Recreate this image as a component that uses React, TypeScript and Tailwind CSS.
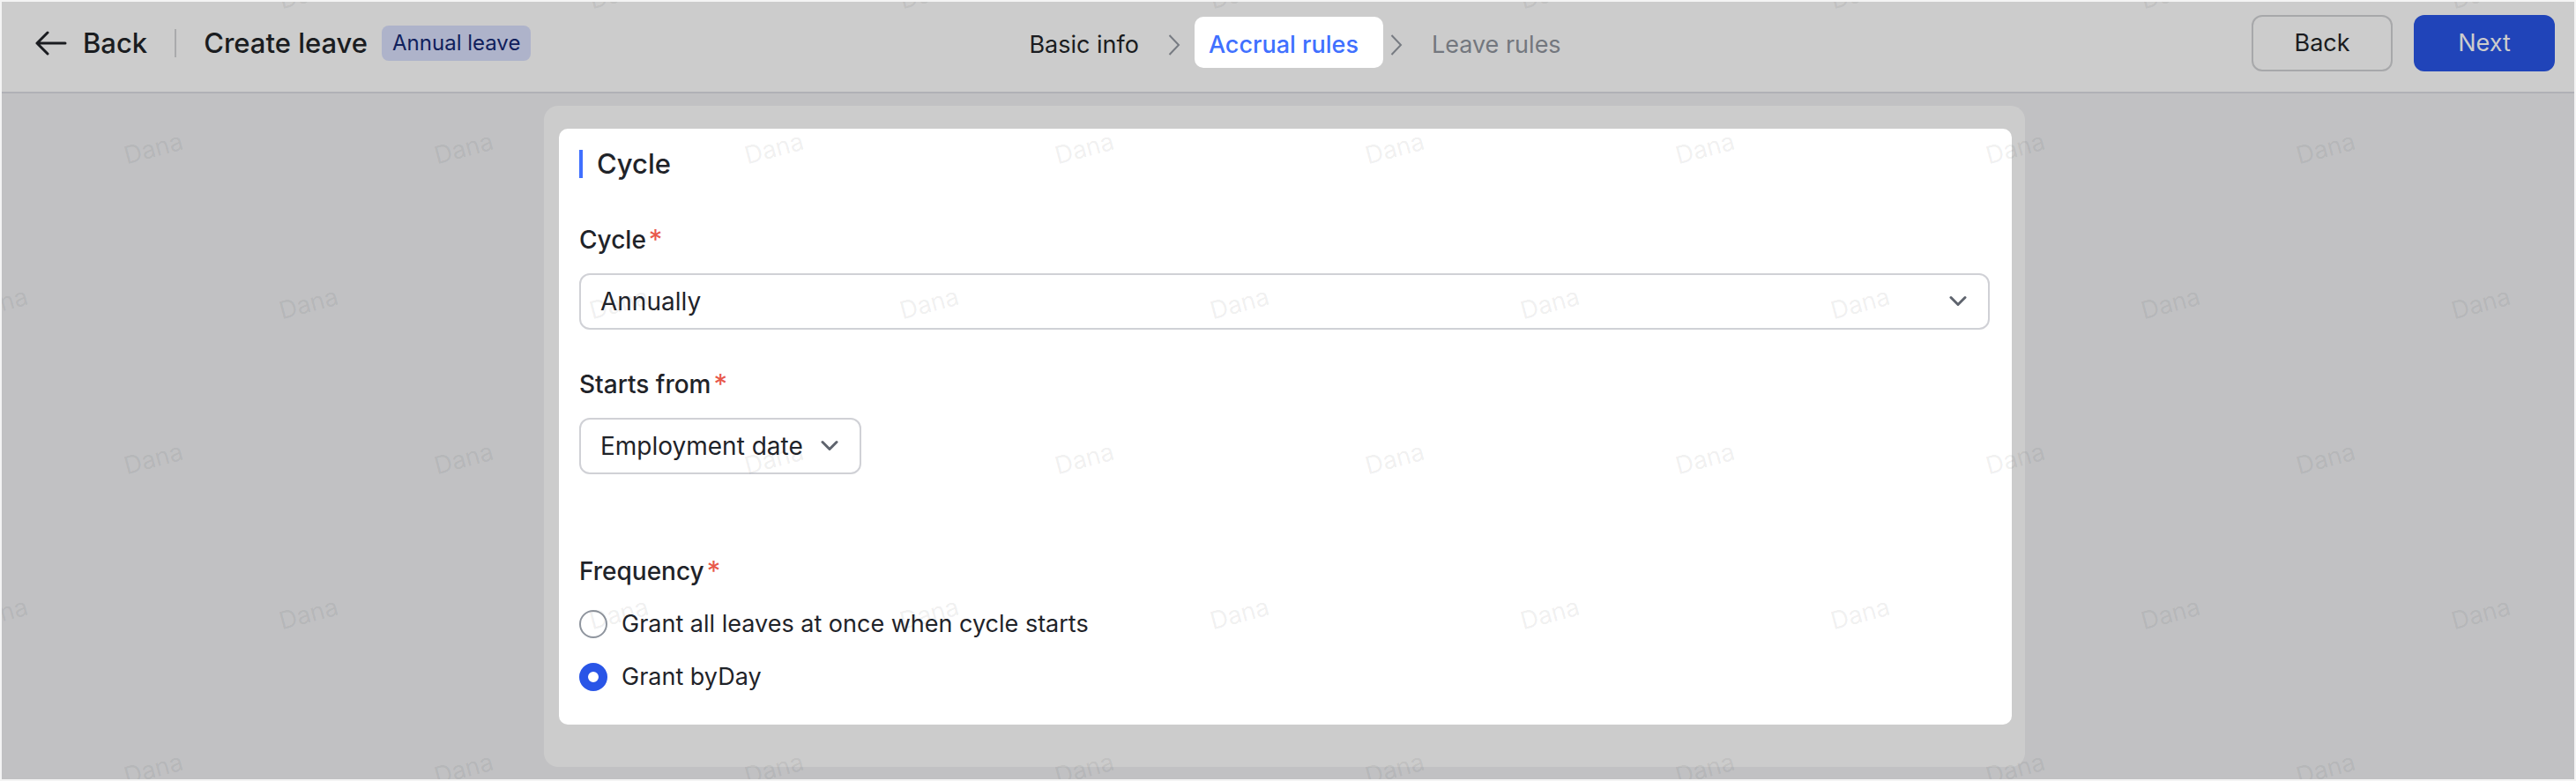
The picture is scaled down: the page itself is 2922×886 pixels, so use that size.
import React from 'react';

interface FieldLabelProps {
  htmlFor: string;
  children: React.ReactNode;
}

interface SelectFieldProps {
  id: string;
  options: string[];
  className: string;
}

interface RadioOptionProps {
  label: string;
  value: string;
  checked: boolean;
  onChange: (value: string) => void;
}

const WATERMARK_STEP = 176;

const watermarks = Array.from({ length: 6 }, (_, row) =>
  Array.from({ length: 9 }, (_, col) => ({
    left: (col * 2 + (row % 2)) * WATERMARK_STEP - 4,
    top: row * WATERMARK_STEP - 10,
  }))
).flat();

const Watermark = () => (
  <div className="pointer-events-none absolute inset-0 overflow-hidden" aria-hidden="true">
    {watermarks.map(({ left, top }) => (
      <span
        key={`${left}-${top}`}
        className="absolute -translate-x-1/2 -translate-y-1/2 -rotate-15 text-[28px] leading-8 text-[#1f2329]/8"
        style={{ left, top }}
      >
        Dana
      </span>
    ))}
  </div>
);

const StepArrow = () => (
  <svg width="14" height="26" viewBox="0 0 14 26" fill="none" className="shrink-0">
    <path d="M1.5 2L12 13L1.5 24" stroke="#777b82" strokeWidth="2" />
  </svg>
);

const Required = () => <span className="text-[31px] font-normal text-[#e8584b]">*</span>;

const FieldLabel = ({ htmlFor, children }: FieldLabelProps) => (
  <label htmlFor={htmlFor} className="flex gap-[3px] leading-10 font-medium">
    {children}
    <Required />
  </label>
);

const SelectField = ({ id, options, className }: SelectFieldProps) => (
  <div className={`relative ${className}`}>
    <select
      id={id}
      className="h-16 w-full appearance-none rounded-xl border-2 border-[#d0d1d6] bg-white pr-16 pl-[22px] outline-none"
    >
      {options.map((option) => (
        <option key={option}>{option}</option>
      ))}
    </select>
    <svg
      width="20"
      height="14"
      viewBox="0 0 20 14"
      fill="none"
      className="pointer-events-none absolute top-[25px] right-[26px]"
    >
      <path d="M2 2.5L10 10.5L18 2.5" stroke="#5f646e" strokeWidth="3" strokeLinecap="round" strokeLinejoin="round" />
    </svg>
  </div>
);

const RadioOption = ({ label, value, checked, onChange }: RadioOptionProps) => (
  <label className="flex items-center gap-4 text-[27px] leading-10">
    <input
      type="radio"
      name="frequency"
      value={value}
      checked={checked}
      onChange={() => onChange(value)}
      className="size-8 appearance-none rounded-full border-2 border-[#8f959e] bg-white checked:border-10 checked:border-[#2955e7]"
    />
    {label}
  </label>
);

export default function App() {
  const [frequency, setFrequency] = React.useState('day');

  return (
    <div className="relative min-h-screen border-2 border-[#f4f4f4] bg-[#c1c1c3] font-['Inter',sans-serif] text-[28px] text-[#1f2329]">
      <header className="flex h-[104px] items-start border-b-2 border-[#b0b1b6] bg-[#cccccc] pr-[22px] pl-[38px] text-[27px] leading-10 text-[#1a1c20]">
        <div className="flex h-[94px] flex-1 items-center text-[31px] font-medium">
          <button type="button" className="flex items-center gap-[18px]">
            <svg width="36" height="28" viewBox="0 0 36 28" fill="none">
              <path d="M34 14H2M14 2L2 14L14 26" stroke="currentColor" strokeWidth="3" strokeLinecap="round" strokeLinejoin="round" />
            </svg>
            Back
          </button>
          <div className="mx-[31px] h-8 w-[2px] bg-[#a9aaac]" />
          <h1>Create leave</h1>
          <span className="ml-4 rounded-lg bg-[#aeb3ca] px-3 text-2xl leading-10 font-normal text-[#10205c]">
            Annual leave
          </span>
        </div>

        <nav className="flex h-[98px] items-center">
          <a href="#basic" className="mr-[33px]">Basic info</a>
          <StepArrow />
          <a
            href="#accrual"
            className="mr-2 mb-[6px] ml-4 rounded-[10px] bg-white pt-3 pr-7 pb-[6px] pl-4 font-medium text-[#4070ff]"
          >
            Accrual rules
          </a>
          <StepArrow />
          <a href="#leave" className="ml-[33px] text-[#73777e]">Leave rules</a>
        </nav>

        <div className="flex h-[94px] flex-1 items-center justify-end gap-6">
          <button type="button" className="h-16 w-40 rounded-xl border-2 border-[#a7a8aa]">Back</button>
          <button type="button" className="h-16 w-40 rounded-xl bg-[#2044b9] text-[#cccccc]">Next</button>
        </div>
      </header>

      <main className="py-[14px] pr-2">
        <div className="mx-auto max-w-[1680px] rounded-2xl bg-[#cccccc] pt-[26px] pr-[15px] pb-12 pl-[17px]">
          <form className="rounded-[10px] bg-white pt-4 pr-[25px] pb-[34px] pl-[23px]">
            <h2 className="flex items-center gap-4 text-[31px] leading-[48px] font-medium">
              <span className="h-8 w-1 bg-[#4070ff]" />
              Cycle
            </h2>

            <div className="mt-[42px] flex flex-col gap-[18px]">
              <FieldLabel htmlFor="cycle">Cycle</FieldLabel>
              <SelectField id="cycle" options={['Annually', 'Monthly']} className="w-full" />
            </div>

            <div className="mt-[42px] flex flex-col gap-[18px]">
              <FieldLabel htmlFor="starts-from">Starts from</FieldLabel>
              <SelectField id="starts-from" options={['Employment date', 'Calendar year']} className="w-80" />
            </div>

            <fieldset className="mt-[90px]">
              <legend className="flex gap-[3px] leading-10 font-medium">
                Frequency
                <Required />
              </legend>
              <div className="mt-5 flex flex-col gap-5">
                <RadioOption
                  label="Grant all leaves at once when cycle starts"
                  value="once"
                  checked={frequency === 'once'}
                  onChange={setFrequency}
                />
                <RadioOption
                  label="Grant byDay"
                  value="day"
                  checked={frequency === 'day'}
                  onChange={setFrequency}
                />
              </div>
            </fieldset>
          </form>
        </div>
      </main>

      <Watermark />
    </div>
  );
}
